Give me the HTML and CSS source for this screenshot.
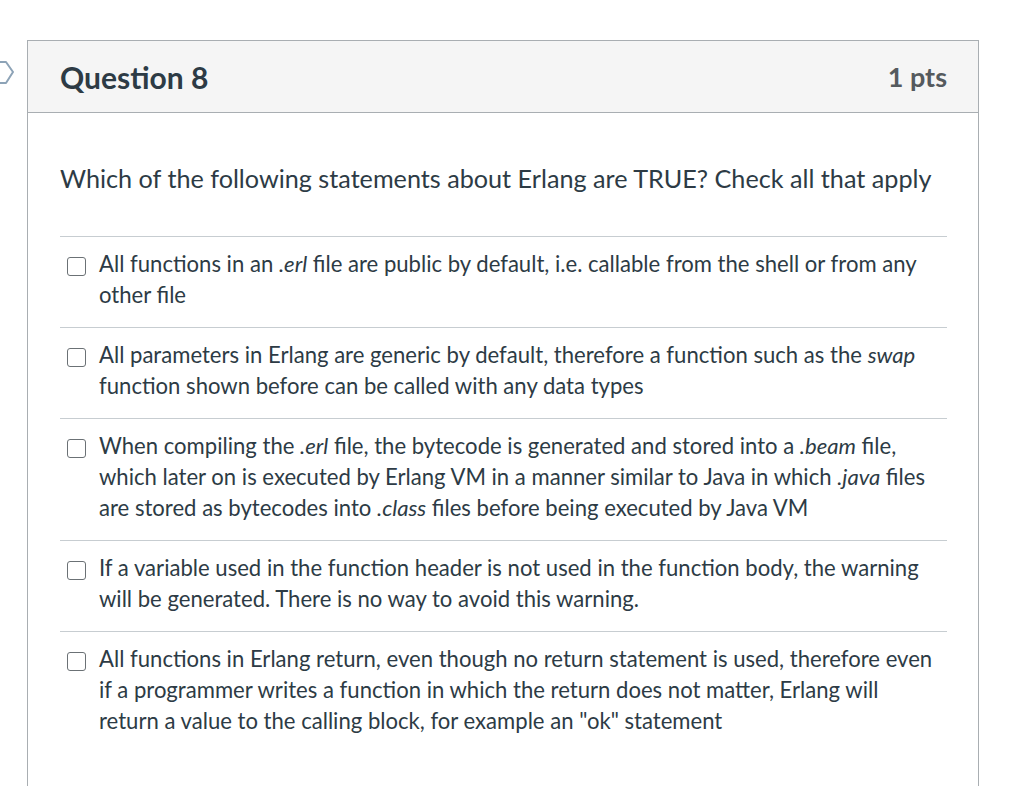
FILE: index.html
```html
<!DOCTYPE html>
<html>
<head>
<meta charset="utf-8">
<link rel="stylesheet" href="styles.css">
</head>
<body>
<div class="page">
  <div class="flag">
    <svg width="16" height="28" viewBox="0 0 16 28"><path d="M-2 2 H6 L13 12 L6 23 H-2" fill="none" stroke="#8da3b7" stroke-width="2" stroke-linejoin="round"/></svg>
  </div>
  <div class="card">
    <div class="card-header">
      <h2 class="q-title">Question 8</h2>
      <span class="q-points">1 pts</span>
    </div>
    <div class="card-body">
      <p class="q-text">Which of the following statements about Erlang are TRUE? Check all that apply</p>
      <ul class="answers">
        <li class="answer"><span class="box"></span><span class="label">All functions in an <em>.erl</em> file are public by default, i.e. callable from the shell or from any other file</span></li>
        <li class="answer"><span class="box"></span><span class="label">All parameters in Erlang are generic by default, therefore a function such as the <em>swap</em> function shown before can be called with any data types</span></li>
        <li class="answer"><span class="box"></span><span class="label">When compiling the <em>.erl</em> file, the bytecode is generated and stored into a <em>.beam</em> file, which later on is executed by Erlang VM in a manner similar to Java in which <em>.java</em> files are stored as bytecodes into <em>.class</em> files before being executed by Java VM</span></li>
        <li class="answer"><span class="box"></span><span class="label">If a variable used in the function header is not used in the function body, the warning will be generated. There is no way to avoid this warning.</span></li>
        <li class="answer"><span class="box"></span><span class="label">All functions in Erlang return, even though no return statement is used, therefore even if a programmer writes a function in which the return does not matter, Erlang will return a value to the calling block, for example an "ok" statement</span></li>
      </ul>
    </div>
  </div>
</div>
</body>
</html>
```

FILE: styles.css
```css
html, body {
  margin: 0;
  padding: 0;
  background: #ffffff;
  font-family: Lato, "Open Sans", sans-serif;
  color: #2d3b45;
}
.page {
  display: flex;
  align-items: flex-start;
  padding-top: 40px;
  height: 746px;
  overflow: hidden;
}
.flag {
  width: 27px;
  padding-top: 20px;
  flex: none;
}
.flag svg { display: block; }
.card {
  width: 950px;
  border: 1px solid #a9aeb2;
  border-bottom: none;
  min-height: 760px;
}
.card-header {
  display: flex;
  justify-content: space-between;
  align-items: center;
  background: #f5f5f5;
  border-bottom: 1px solid #a9aeb2;
  height: 71px;
  padding: 0 31px 0 32px;
}
.q-title {
  margin: 0;
  font-size: 30px;
  font-weight: 700;
  color: #2d3b45;
}
.q-points {
  font-size: 27px;
  font-weight: 700;
  color: #555a5e;
}
.card-body {
  padding: 47px 31px 0 32px;
}
.q-text {
  margin: 0 0 40px 0;
  font-size: 25.2px;
  line-height: 36px;
}
.answers {
  list-style: none;
  margin: 0;
  padding: 0;
}
.answer {
  display: flex;
  align-items: flex-start;
  border-top: 1px solid #c7cdd1;
  padding: 11px 12px 17px 7px;
  font-size: 22.1px;
  line-height: 31px;
}
.box {
  flex: none;
  box-sizing: border-box;
  width: 19px;
  height: 19px;
  border: 1.5px solid #6b7175;
  border-radius: 3px;
  margin-top: 9px;
  margin-right: 13px;
}
.label em { font-style: italic; }
```
